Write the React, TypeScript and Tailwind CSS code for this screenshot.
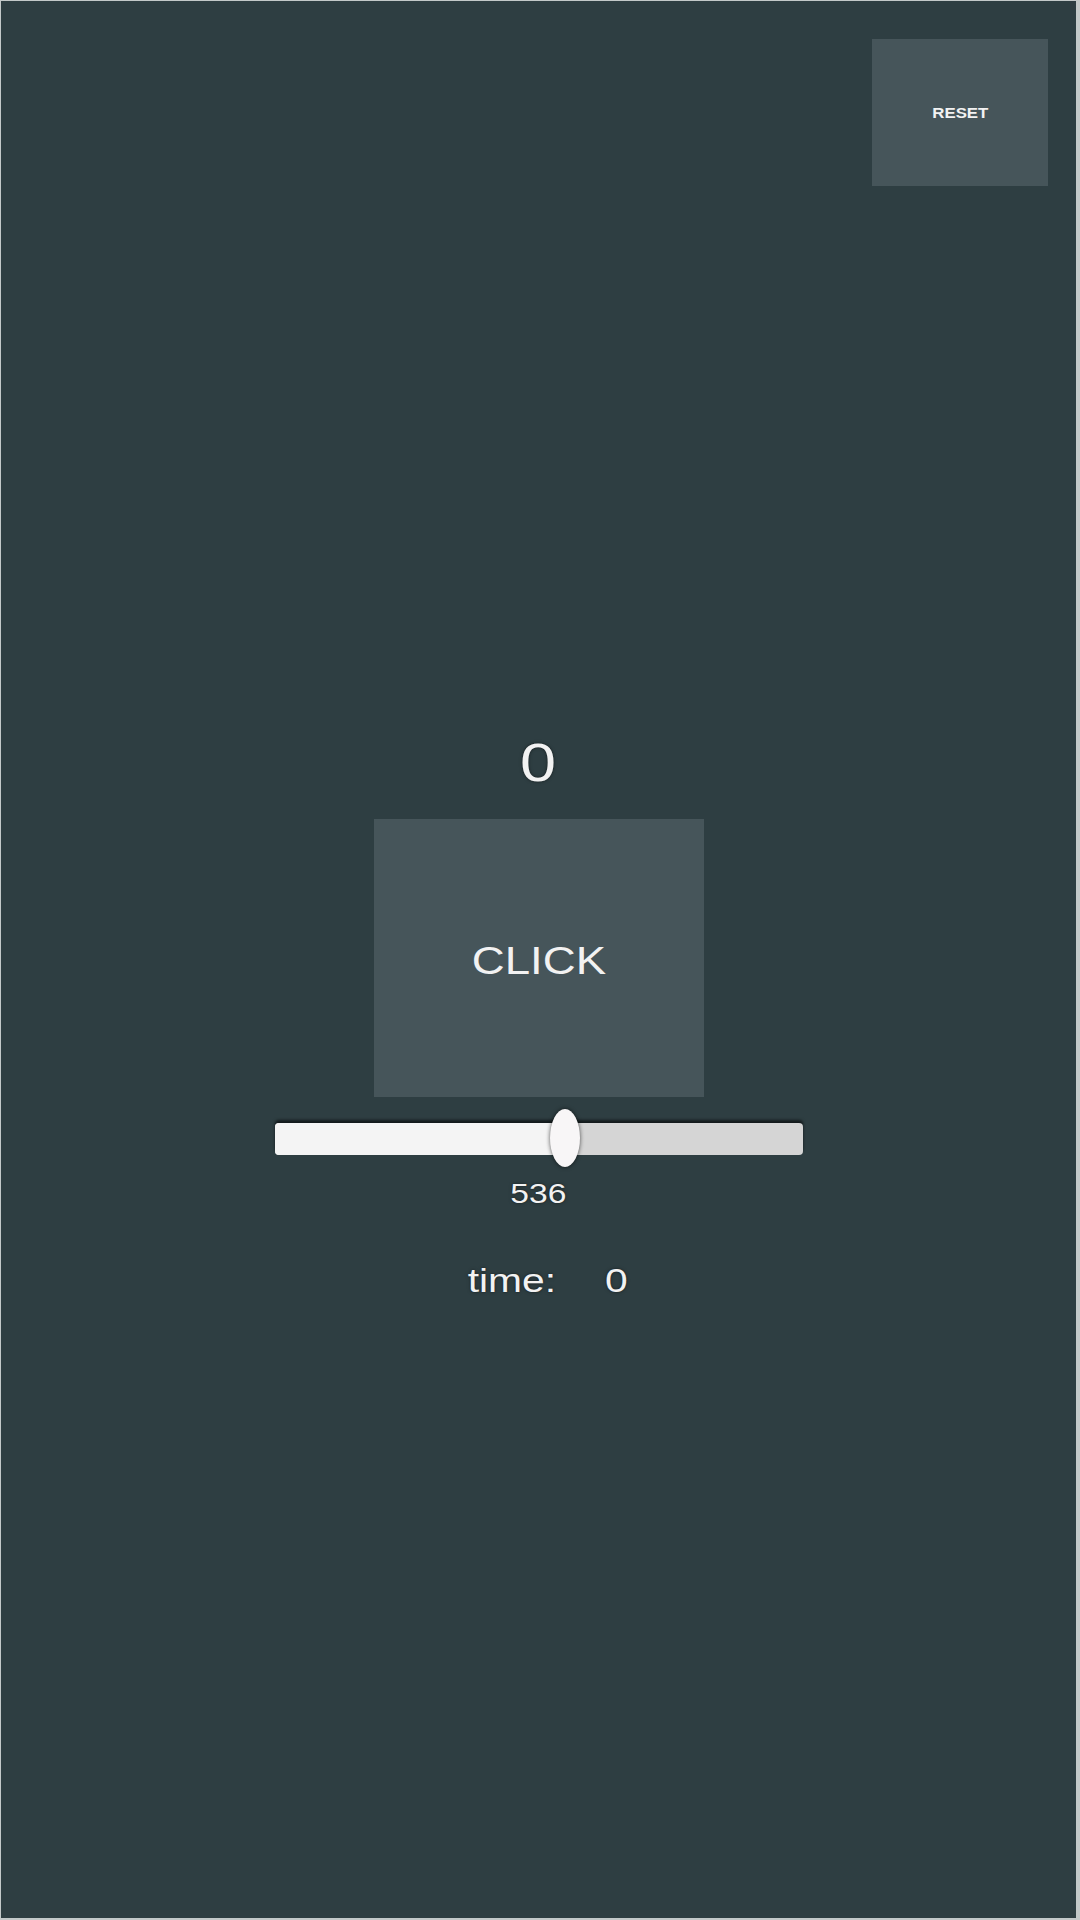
import { useState } from "react";

// Labels are widened by 1.2 on x: the reference capture is stretched horizontally.
function Stretched({ children, className = "" }: { children: React.ReactNode; className?: string }) {
  return <span className={`inline-block scale-x-[1.2] ${className}`}>{children}</span>;
}

function Slider({ value }: { value: number }) {
  // track 528px, thumb centre 290px in for the value 536
  const thumbLeft = 275;
  return (
    <div className="relative flex h-[58px] w-[528px] items-center">
      <div className="mt-[2px] flex h-[32px] w-full overflow-hidden rounded-[4px] bg-[#d5d5d5] shadow-[0_-3px_3px_rgba(0,0,0,0.6)]">
        <div className="h-full w-[290px] bg-[#f4f4f4]" />
      </div>
      <div
        aria-label={`value ${value}`}
        className="absolute top-0 h-[58px] w-[30px] rounded-[50%] bg-[#f8f6f7] shadow-[0_0_4px_rgba(0,0,0,0.65)]"
        style={{ left: thumbLeft }}
      />
    </div>
  );
}

export default function App() {
  const [count, setCount] = useState(0);
  const [time, setTime] = useState(0);
  const speed = 536;

  return (
    <div className="flex h-[1920px] w-full flex-col border-t border-r-[4px] border-b-[2px] border-l border-[#c3c9c9] bg-[#2e3e42] font-['Liberation_Sans',Arial,sans-serif] text-[#f2f2f2] [text-shadow:0_0_3px_rgba(0,0,0,0.55)]">
      <div className="flex justify-end pt-[38px] pr-[28px]">
        <button
          onClick={() => {
            setCount(0);
            setTime(0);
          }}
          className="flex h-[147px] w-[176px] items-center justify-center bg-[#46555a] text-[14px] font-bold leading-none"
        >
          <Stretched>RESET</Stretched>
        </button>
      </div>

      <div className="mt-[549px] flex flex-col items-center">
        <div className="h-[54px] text-[54px] leading-none">
          <Stretched>{count}</Stretched>
        </div>

        <button
          onClick={() => setCount(count + 1)}
          className="mt-[30px] flex h-[278px] w-[330px] items-center justify-center bg-[#46555a] pt-[5px] text-[38px] leading-none"
        >
          <Stretched>CLICK</Stretched>
        </button>

        <div className="mt-[12px]">
          <Slider value={speed} />
        </div>

        <div className="mt-[13px] h-[28px] text-[28px] leading-none">
          <Stretched>{speed}</Stretched>
        </div>

        <div className="mt-[55px] flex h-[34px] gap-[59px] pl-[24px] text-[34px] leading-none">
          <Stretched>time:</Stretched>
          <Stretched>{time}</Stretched>
        </div>
      </div>
    </div>
  );
}
